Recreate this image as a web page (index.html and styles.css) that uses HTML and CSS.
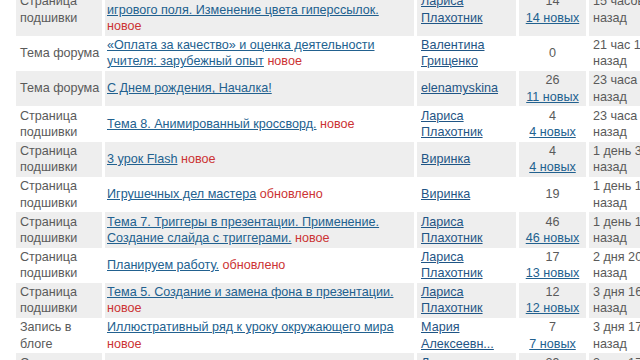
FILE: index.html
```html
<!DOCTYPE html>
<html lang="ru">
<head>
<meta charset="utf-8">
<title>Трекер</title>
<link rel="stylesheet" href="styles.css">
</head>
<body>
<div class="page">
<table class="tracker">
<tr class="odd">
  <td class="type">Страница подшивки</td>
  <td class="title"><a href="#">Тема 9. Гиперссылки. Создание интерактивного<br>игрового поля. Изменение цвета гиперссылок.</a> <span class="mark">новое</span></td>
  <td class="author"><a href="#">Лариса Плахотник</a></td>
  <td class="replies">14<br><a href="#">14 новых</a></td>
  <td class="last">15 часов 12 мин назад</td>
</tr>
<tr class="even">
  <td class="type">Тема форума</td>
  <td class="title"><a href="#">«Оплата за качество» и оценка деятельности учителя: зарубежный опыт</a> <span class="mark">новое</span></td>
  <td class="author"><a href="#">Валентина Грищенко</a></td>
  <td class="replies">0</td>
  <td class="last">21 час 14 мин назад</td>
</tr>
<tr class="odd">
  <td class="type">Тема форума</td>
  <td class="title"><a href="#">С Днем рождения, Началка!</a></td>
  <td class="author"><a href="#">elenamyskina</a></td>
  <td class="replies">26<br><a href="#">11 новых</a></td>
  <td class="last">23 часа 14 мин назад</td>
</tr>
<tr class="even">
  <td class="type">Страница подшивки</td>
  <td class="title"><a href="#">Тема 8. Анимированный кроссворд.</a> <span class="mark">новое</span></td>
  <td class="author"><a href="#">Лариса Плахотник</a></td>
  <td class="replies">4<br><a href="#">4 новых</a></td>
  <td class="last">23 часа 50 мин назад</td>
</tr>
<tr class="odd">
  <td class="type">Страница подшивки</td>
  <td class="title"><a href="#">3 урок Flash</a> <span class="mark">новое</span></td>
  <td class="author"><a href="#">Виринка</a></td>
  <td class="replies">4<br><a href="#">4 новых</a></td>
  <td class="last">1 день 3 часа назад</td>
</tr>
<tr class="even">
  <td class="type">Страница подшивки</td>
  <td class="title"><a href="#">Игрушечных дел мастера</a> <span class="mark">обновлено</span></td>
  <td class="author"><a href="#">Виринка</a></td>
  <td class="replies">19</td>
  <td class="last">1 день 15 часов назад</td>
</tr>
<tr class="odd">
  <td class="type">Страница подшивки</td>
  <td class="title"><a href="#">Тема 7. Триггеры в презентации. Применение. Создание слайда с триггерами.</a> <span class="mark">новое</span></td>
  <td class="author"><a href="#">Лариса Плахотник</a></td>
  <td class="replies">46<br><a href="#">46 новых</a></td>
  <td class="last">1 день 16 часов назад</td>
</tr>
<tr class="even">
  <td class="type">Страница подшивки</td>
  <td class="title"><a href="#">Планируем работу.</a> <span class="mark">обновлено</span></td>
  <td class="author"><a href="#">Лариса Плахотник</a></td>
  <td class="replies">17<br><a href="#">13 новых</a></td>
  <td class="last">2 дня 20 часов назад</td>
</tr>
<tr class="odd">
  <td class="type">Страница подшивки</td>
  <td class="title"><a href="#">Тема 5. Создание и замена фона в презентации.</a> <span class="mark">новое</span></td>
  <td class="author"><a href="#">Лариса Плахотник</a></td>
  <td class="replies">12<br><a href="#">12 новых</a></td>
  <td class="last">3 дня 16 часов назад</td>
</tr>
<tr class="even">
  <td class="type">Запись в блоге</td>
  <td class="title"><a href="#">Иллюстративный ряд к уроку окружающего мира</a> <span class="mark">новое</span></td>
  <td class="author"><a href="#">Мария Алексеевн...</a></td>
  <td class="replies">7<br><a href="#">7 новых</a></td>
  <td class="last">3 дня 17 часов назад</td>
</tr>
<tr class="odd">
  <td class="type">Страница подшивки</td>
  <td class="title"><a href="#">Тема 4. Вставка рисунков и фигур.</a> <span class="mark">новое</span></td>
  <td class="author"><a href="#">Лариса Плахотник</a></td>
  <td class="replies">29<br><a href="#">29 новых</a></td>
  <td class="last">3 дня 17 часов назад</td>
</tr>
</table>
</div>
</body>
</html>
```

FILE: styles.css
```css
html, body {
  margin: 0;
  padding: 0;
  background: #ffffff;
  overflow: hidden;
}

.page {
  width: 720px;
  padding-left: 13px;
  margin-top: -16px;
}

.tracker {
  table-layout: fixed;
  width: 690px;
  border-collapse: separate;
  border-spacing: 3px 0;
  font-family: "Liberation Sans", Arial, sans-serif;
  font-size: 12.6px;
  line-height: 16.33px;
  color: #5a5a5a;
}

.tracker td {
  box-sizing: border-box;
  padding: 1.33px 4px;
  vertical-align: middle;
  text-align: left;
}

.tracker tr.odd td {
  background: #eeeeee;
}

.tracker tr.even td {
  background: #ffffff;
}

.tracker a {
  color: #22618f;
  text-decoration: underline;
}

.tracker .author a {
  color: #1f5585;
}

.tracker td.type {
  width: 86px;
  padding-right: 0;
}

.tracker td.title {
  width: 309px;
  padding-left: 2px;
}

.tracker td.author {
  width: 99px;
}

.tracker td.replies {
  width: 67px;
  text-align: center;
}

.tracker td.last {
  width: 111px;
}

.mark {
  color: #cc3333;
}
```
